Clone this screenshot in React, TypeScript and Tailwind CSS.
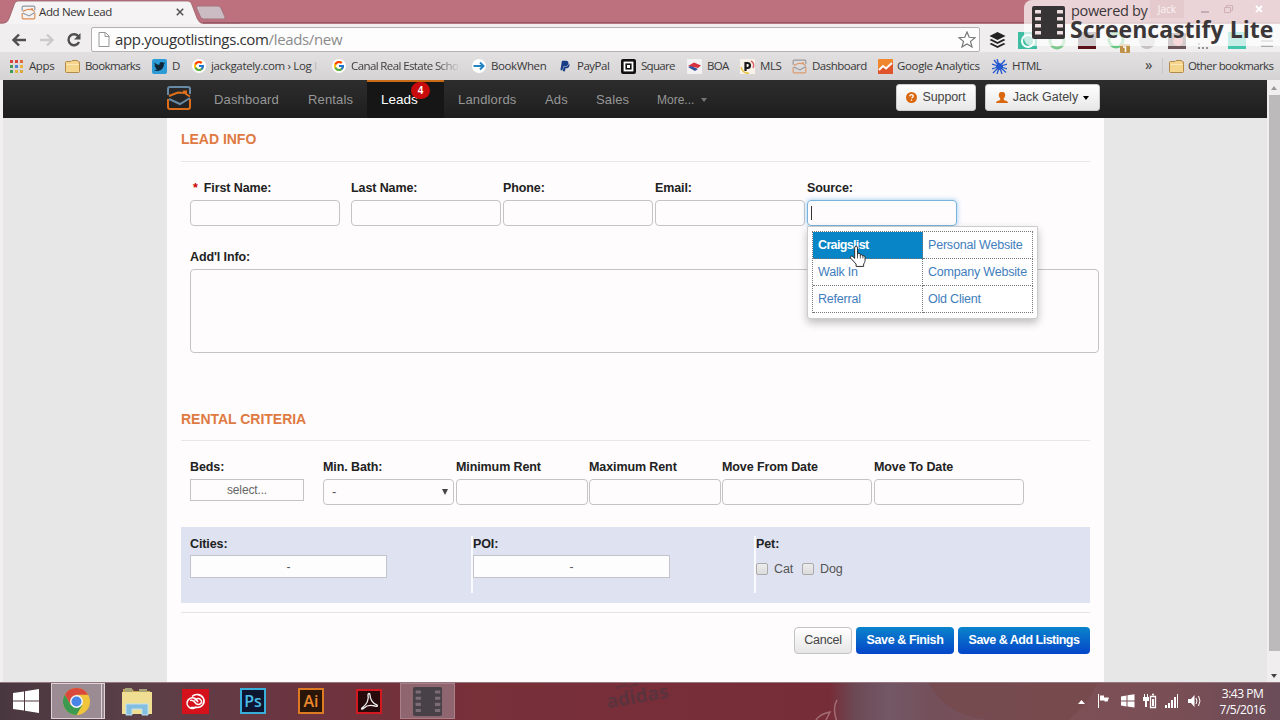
import type { ReactNode } from "react";
import { FcGoogle } from "react-icons/fc";
import { FaPaypal, FaTwitter } from "react-icons/fa";

const LEAD_FIELDS = [
  { label: "First Name:", slot: "w-[161px]", required: true },
  { label: "Last Name:", slot: "w-[152px]" },
  { label: "Phone:", slot: "w-[152px]" },
  { label: "Email:", slot: "w-[152px]" },
];

const RENTAL_FIELDS = [
  { label: "Minimum Rent", slot: "w-[133px]", input: "w-[132px]" },
  { label: "Maximum Rent", slot: "w-[133px]", input: "w-[132px]" },
  { label: "Move From Date", slot: "w-[152px]", input: "w-[150px]" },
  { label: "Move To Date", slot: "w-[152px]", input: "w-[150px]" },
];

const SOURCES = [
  "Craigslist",
  "Personal Website",
  "Walk In",
  "Company Website",
  "Referral",
  "Old Client",
];

function HouseIcon({ size, top, bottom }: { size: number; top: string; bottom: string }) {
  return (
    <svg width={size} height={size} viewBox="0 0 26 26" fill="none" strokeWidth="2">
      <path d="M2 10V4a2 2 0 0 1 2-2h18a2 2 0 0 1 2 2v5" stroke={top} />
      <path d="M3 11l9-3.500 6 .5V6.500h2V9l4 2.500M24 14v8a2 2 0 0 1-2 2H4a2 2 0 0 1-2-2V14" stroke={bottom} />
      <path d="M3 14l11 5 10-6" stroke={top} />
    </svg>
  );
}

function FolderIcon() {
  return (
    <svg width="15" height="13" viewBox="0 0 15 13">
      <path d="M.5 2.500a1 1 0 0 1 1-1H6l1 -1h5.500l1 1.500h1v9.500a1 1 0 0 1-1 1h-12a1 1 0 0 1-1-1z" fill="#f5d58c" stroke="#b28a4c" />
      <path d="M1.500 4.500h12" stroke="#fce9b4" />
    </svg>
  );
}

function AppsIcon() {
  const colors = ["#d9453d", "#d9453d", "#dd6b3a", "#4a9a52", "#4b7fd0", "#e4b43c", "#3f9a57", "#e4b43c", "#d8a93c"];
  return (
    <svg width="13" height="13" viewBox="0 0 13 13">
      {colors.map((color, i) => (
        <rect key={i} x={(i % 3) * 5} y={Math.floor(i / 3) * 5} width="3" height="3" fill={color} />
      ))}
    </svg>
  );
}

function FilmIcon({ width, height, color, hole }: { width: number; height: number; color: string; hole: string }) {
  return (
    <svg width={width} height={height} viewBox="0 0 33 33" preserveAspectRatio="none">
      <rect width="33" height="33" rx="2" fill={color} />
      {[4, 11, 18, 25].map((y) => (
        <g key={y} fill={hole}>
          <rect x="3" y={y} width="6" height="3.500" rx=".5" />
          <rect x="25" y={y} width="6" height="3.500" rx=".5" />
        </g>
      ))}
    </svg>
  );
}

function Bookmark({ slot, gap = "gap-[5px]", tracking = "tracking-[-0.25px]", icon, children }: { slot: string; gap?: string; tracking?: string; icon: ReactNode; children: ReactNode }) {
  return (
    <div className={`flex shrink-0 items-center ${gap} ${slot}`}>
      <span className="flex shrink-0">{icon}</span>
      <span className={`whitespace-nowrap ${tracking}`}>{children}</span>
    </div>
  );
}

function TabStrip() {
  return (
    <div className="relative h-6 bg-[#bd707d]">
      <svg className="absolute inset-0" width="240" height="24" viewBox="0 0 240 24">
        <path d="M0 23.500h2c5 0 6-2 8-7l4-11C15 2 16 1 19 1h167c4 0 5 1 6 4l5 13c2 4 3 5.500 6 5.500V24H0z" fill="#f6f3f4" />
        <path d="M0 23h2c5 0 6-2 8-7l4-11C15 2 16 1 19 1h167c4 0 5 1 6 4l5 13c2 4 3 5 6 5h37" fill="none" stroke="#95626c" strokeWidth=".8" />
        <path d="M198 6h20q2 0 3 2l4 9q.5 2-1.500 2h-20q-2 0-3-2l-4-9q-.5-2 1.500-2z" fill="#cbbcc4" stroke="#a2727d" />
      </svg>
      <div className="absolute top-[22px] right-0 left-[203px] h-px bg-[#8c5b65]" />
      <div className="relative flex h-6 items-center pl-[21px]">
        <HouseIcon size={15} top="#8e97a0" bottom="#de8c50" />
        <span className="ml-[3px] w-[137px] text-[11.500px] tracking-[-0.35px] text-[#333]">Add New Lead</span>
        <svg width="8" height="8" viewBox="0 0 8 8" stroke="#555" strokeWidth="1.600">
          <path d="M.8.8l6.400 6.400M7.200.8L.8 7.200" />
        </svg>
      </div>
    </div>
  );
}

function Toolbar() {
  return (
    <div className="flex h-7 items-center bg-[#f0eeef] pl-3">
      <svg className="mt-[3px]" width="70" height="18" viewBox="0 0 70 18" fill="none" strokeWidth="2.400">
        <path d="M14 9H2M7 3.500L1.500 9 7 14.500" stroke="#4f4f4f" />
        <path d="M28 9h12M35 3.500L40.500 9 35 14.500" stroke="#cbcbcb" />
        <path d="M66.500 5.500A5.500 5.500 0 1 0 67 11" stroke="#4f4f4f" />
        <path d="M68.500 2v6.500H62z" fill="#4f4f4f" />
      </svg>
      <div className="mt-[3px] ml-[9px] flex h-[25px] w-[889px] items-center rounded-[2px] border border-[#b4b2b3] bg-[#fefdfd] pl-[6px]">
        <svg width="12" height="15" viewBox="0 0 12 15" fill="#fff" stroke="#969696" className="shrink-0">
          <path d="M1 .5h6.500L11 4v10.500H1zM7 1v3.500h4" />
        </svg>
        <span className="ml-[5px] w-[843px] text-[15px] tracking-[-0.35px] text-[#8b8b8b]">
          <span className="text-[#333]">app.yougotlistings.com</span>/leads/new
        </span>
        <svg width="18" height="17" viewBox="0 0 18 17" fill="#fff" stroke="#777" strokeWidth="1.200" className="shrink-0">
          <path d="M9 1l2.200 5.300 5.800.4-4.500 3.700 1.500 5.600L9 13l-5 3 1.500-5.600L1 6.700l5.800-.4z" />
        </svg>
      </div>
      <svg className="mt-[3px] ml-[9px]" width="17" height="18" viewBox="0 0 17 18" fill="#222">
        <path d="M8.500 1l8 4-8 4-8-4z" />
        <path d="M2.500 8l6 3 6-3 2 1-8 4-8-4z" />
        <path d="M2.500 12l6 3 6-3 2 1-8 4-8-4z" />
      </svg>
      <svg className="mt-[6px] ml-[12px]" width="262" height="27" viewBox="0 0 262 27">
        <rect x="0" y="4" width="19" height="17" fill="#3fbda2" />
        <circle cx="10" cy="13" r="6" fill="none" stroke="#f4fffc" strokeWidth="2" />
        <circle cx="39" cy="13" r="7" fill="none" stroke="#7cc88a" strokeWidth="3" />
        <rect x="60" y="4" width="18" height="17" fill="#635357" />
        <rect x="60" y="18" width="18" height="3" fill="#5b1219" />
        <circle cx="98" cy="12" r="7" fill="none" stroke="#65c680" strokeWidth="3" />
        <rect x="102" y="16" width="10" height="9" rx="1" fill="#bf9146" />
        <path d="M105 19h2.500v5" fill="none" stroke="#fff" strokeWidth="1.500" />
        <circle cx="129" cy="13" r="8" fill="#c5c1c2" />
        <rect x="150" y="5" width="18" height="16" fill="#6b5558" />
        <circle cx="160" cy="13" r="5" fill="#e17883" />
        <path d="M180 20h2m2 0h2m2 0h2m-10-4h2" stroke="#777" strokeWidth="1.500" />
        <rect x="210" y="4" width="18" height="17" fill="#43c7ac" />
        <path d="M243 8h12m-12 5h12m-12 5h12" stroke="#aaa" strokeWidth="2" />
      </svg>
    </div>
  );
}

function BookmarkBar() {
  return (
    <div className="flex h-7 items-center bg-[linear-gradient(#e2e0e1,#d5d3d4)] pl-[10px] text-[11.500px] text-[#393939]">
      <Bookmark slot="w-[55px]" gap="gap-[6px]" tracking="tracking-[-0.4px]" icon={<AppsIcon />}>Apps</Bookmark>
      <Bookmark slot="w-[87px]" tracking="tracking-[-0.6px]" icon={<FolderIcon />}>Bookmarks</Bookmark>
      <Bookmark
        slot="w-[40px]"
        icon={<span className="flex size-[15px] items-center justify-center rounded-[2px] bg-[#2c9bd6]"><FaTwitter size={11} color="#102738" /></span>}
      >
        D
      </Bookmark>
      <Bookmark slot="w-[140px]" tracking="tracking-[-0.35px]" icon={<span className="rounded-full bg-white p-px"><FcGoogle size={12} /></span>}>
        jackgately.com › Log <span className="text-[#bbb]">I</span>
      </Bookmark>
      <Bookmark slot="w-[140px]" tracking="tracking-[-0.6px]" icon={<span className="rounded-full bg-white p-px"><FcGoogle size={12} /></span>}>
        <span className="bg-[linear-gradient(90deg,#393939_80%,#c8c8c8)] bg-clip-text text-transparent">Canal Real Estate Scho</span>
      </Bookmark>
      <Bookmark
        slot="w-[87px]"
        tracking="tracking-[-0.4px]"
        icon={
          <svg width="14" height="14" viewBox="0 0 14 14">
            <circle cx="7" cy="7" r="7" fill="#fff" />
            <path d="M1.500 7h10M8 3.500L11.500 7 8 10.500" fill="none" stroke="#2383c0" strokeWidth="2" />
          </svg>
        }
      >
        BookWhen
      </Bookmark>
      <Bookmark slot="w-[62px]" gap="gap-[6px]" tracking="tracking-[-0.5px]" icon={<FaPaypal size={12} color="#163d86" />}>PayPal</Bookmark>
      <Bookmark
        slot="w-[66px]"
        tracking="tracking-[-0.7px]"
        icon={
          <svg width="15" height="15" viewBox="0 0 15 15">
            <rect width="15" height="15" rx="2" fill="#111" />
            <rect x="3.500" y="3.500" width="8" height="8" fill="none" stroke="#fff" strokeWidth="1.800" />
            <rect x="6" y="6" width="3" height="3" fill="#fff" />
          </svg>
        }
      >
        Square
      </Bookmark>
      <Bookmark
        slot="w-[53px]"
        tracking="tracking-[-0.7px]"
        icon={
          <svg width="15" height="15" viewBox="0 0 15 15">
            <rect width="15" height="15" fill="#f4f1f2" />
            <path d="M1 7l6-3.500 7 3-3 2.500z" fill="#d9303e" />
            <path d="M1 8l3-1 7 3-3 2z" fill="#31509a" />
          </svg>
        }
      >
        BOA
      </Bookmark>
      <Bookmark
        slot="w-[52px]"
        tracking="tracking-[-0.4px]"
        icon={
          <svg width="15" height="15" viewBox="0 0 15 15">
            <rect width="15" height="15" fill="#f7f2ea" />
            <path d="M11 2a5 5 0 0 1 2 7" fill="none" stroke="#dc6464" strokeWidth="1.500" />
            <path d="M1 8q2 7 8 6" fill="none" stroke="#e8c74a" strokeWidth="1.500" />
            <path d="M5.500 3v9M5.500 4h2a2 2 0 0 1 0 5h-2" fill="none" stroke="#1a1a1a" strokeWidth="2.200" />
          </svg>
        }
      >
        MLS
      </Bookmark>
      <Bookmark slot="w-[86px]" tracking="tracking-[-0.5px]" icon={<HouseIcon size={15} top="#999" bottom="#dd9a70" />}>Dashboard</Bookmark>
      <Bookmark
        slot="w-[114px]"
        tracking="tracking-[-0.35px]"
        gap="gap-1"
        icon={
          <svg width="15" height="15" viewBox="0 0 15 15">
            <rect width="15" height="15" rx="1" fill="#f0862e" />
            <path d="M0 11l5-4 3 2 7-6v12H0z" fill="#e0542c" />
            <path d="M1 11l4-4 3 2.500L14 4" fill="none" stroke="#fff" strokeWidth="2" />
          </svg>
        }
      >
        Google Analytics
      </Bookmark>
      <Bookmark
        slot="w-[153px]"
        tracking="tracking-[-0.45px]"
        icon={
          <svg width="15" height="15" viewBox="0 0 15 15" stroke="#2458cf" strokeWidth="1.300">
            <path d="M7.500 4v7M4 7.500h7M7.500 7.500L2 1M7.500 7.500L13 1M7.500 7.500L1 14M7.500 7.500l6.500 6M7.500 7.500L0 5M7.500 7.500L15 5M7.500 7.500L0 10M7.500 7.500l7.500 2.500M7.500 7.500L5 0M7.500 7.500L10 15M7.500 7.500L5 15" />
            <circle cx="7.500" cy="7.500" r="2.500" fill="#2458cf" />
          </svg>
        }
      >
        HTML
      </Bookmark>
      <span className="w-[17px] shrink-0 pb-[3px] text-[15px] leading-none">»</span>
      <span className="mr-[6px] h-4 w-px shrink-0 bg-[#cac8c9]" />
      <Bookmark slot="w-[110px]" tracking="tracking-[-0.6px]" gap="gap-1" icon={<FolderIcon />}>Other bookmarks</Bookmark>
    </div>
  );
}

// Recorder watermark over the top right corner of the window
function Watermark() {
  return (
    <div className="absolute top-0 right-0 flex h-[46px] w-[256px] overflow-hidden rounded-l-[8px] bg-white/70 pl-[8px]">
      <div className="pt-[6px]">
        <FilmIcon width={33} height={33} color="#373435" hole="#efdfe1" />
      </div>
      <div className="ml-[5px] pt-px whitespace-nowrap text-[#3b3738]">
        <div className="ml-px text-[14.500px] leading-5 tracking-[-0.35px]">powered by</div>
        <div className="-mt-[4px] text-[23px] leading-[25px] font-bold tracking-[0.02px]">Screencastify Lite</div>
      </div>
      <div className="absolute top-0 right-0 flex h-[18px] w-[130px] items-center text-[10px] text-white/80">
        <span className="flex h-full w-[34px] items-center justify-end bg-[#d9b8bf]/40 pr-[8px]">Jack</span>
        <svg className="ml-[14px]" width="72" height="10" viewBox="0 0 72 10" fill="none">
          <path d="M3 8h8" stroke="#b9a2a7" strokeWidth="1.500" />
          <path d="M26.500 3.500h6v5h-6zM28.500 3V1.500h6v5H33" stroke="#d2b0b7" />
          <path d="M58 2l6 6M64 2l-6 6" stroke="#fff" strokeWidth="1.800" />
        </svg>
      </div>
    </div>
  );
}

function NavLink({ slot, children }: { slot: string; children: ReactNode }) {
  return <a className={`flex shrink-0 items-center pt-[2px] pl-[14px] ${slot}`}>{children}</a>;
}

function AppNav() {
  return (
    <nav className="flex h-[38px] items-stretch bg-[linear-gradient(#2d2d2d,#1e1e1e)] pl-[163px] text-[13px] tracking-[0.15px] text-[#979797]">
      <div className="flex w-[34px] items-center pb-[2px]">
        <HouseIcon size={26} top="#6789a3" bottom="#dd6f1b" />
      </div>
      <NavLink slot="w-[94px]">Dashboard</NavLink>
      <NavLink slot="w-[73px]">Rentals</NavLink>
      <a className="relative flex w-[77px] shrink-0 items-center border-t-2 border-[#c96a17] bg-[#161616] pl-[14px] text-[13.500px] tracking-[0px] text-white">
        Leads
        <span className="absolute top-0 left-[44px] flex h-[17px] w-[19px] items-center justify-center rounded-full bg-[#c90b0b] text-[10px] font-bold">4</span>
      </a>
      <NavLink slot="w-[87px]">Landlords</NavLink>
      <NavLink slot="w-[51px]">Ads</NavLink>
      <NavLink slot="w-[61px]">Sales</NavLink>
      <NavLink slot="w-[253px]">
        <span className="text-xs tracking-[0px]">More...</span>
        <span className="ml-[7px] border-x-[3.500px] border-t-4 border-x-transparent border-t-[#777]" />
      </NavLink>
      <div className="flex items-start gap-[9px] pt-1 text-[12.500px] tracking-[-0.1px] text-[#444]">
        <button className="flex h-[27px] w-[80px] items-center justify-center gap-[5px] rounded-[3px] border border-[#ccc] bg-[linear-gradient(#fff,#e7e7e7)]">
          <svg width="11" height="11" viewBox="0 0 11 11">
            <circle cx="5.500" cy="5.500" r="5.500" fill="#d9680f" />
            <path d="M3.800 4.300q0-1.600 1.700-1.600t1.700 1.500q0 .9-1.700 1.800" fill="none" stroke="#fff" strokeWidth="1.300" />
            <circle cx="5.500" cy="8" r=".8" fill="#fff" />
          </svg>
          Support
        </button>
        <button className="flex h-[27px] w-[115px] items-center justify-center rounded-[3px] border border-[#ccc] bg-[linear-gradient(#fff,#e7e7e7)]">
          <svg className="mr-[5px]" width="12" height="11" viewBox="0 0 12 11" fill="#d9680f">
            <path d="M2.800 3a3.200 3.200 0 0 1 6.400 0c0 1.500-.7 2.800-1.400 3.500V8c1.700.5 4.200 1 4.200 3H0c0-2 2.500-2.500 4.200-3V6.500C3.500 5.800 2.800 4.500 2.800 3z" />
          </svg>
          <span className="tracking-[0px]">Jack Gately</span>
          <span className="ml-[5px] border-x-[3.500px] border-t-4 border-x-transparent border-t-black" />
        </button>
      </div>
    </nav>
  );
}

function Label({ children }: { children: ReactNode }) {
  return <label className="block h-[17px] text-[12.500px] leading-[17px] font-bold tracking-[-0.1px] whitespace-nowrap text-[#222]">{children}</label>;
}

function SourceMenu() {
  return (
    <div className="absolute top-[26px] left-0 z-10 w-[231px] rounded-b-[3px] border border-[#ccc] bg-white p-[4px] pb-[5px] shadow-[0_4px_8px_rgba(0,0,0,0.25)]">
      <div className="grid grid-cols-2 border-t border-l border-dotted border-[#777] text-[12.500px] tracking-[-0.2px]">
        {SOURCES.map((source, i) => (
          <div
            key={source}
            className={`flex h-[27px] items-center border-r border-b border-dotted border-[#777] pl-[5px] whitespace-nowrap ${
              i === 0 ? "bg-[#0885c7] font-bold tracking-[-0.65px] text-white" : "text-[#3f7ebd]"
            }`}
          >
            {source}
          </div>
        ))}
      </div>
      <svg className="absolute top-[18px] left-[41px]" width="17" height="23" viewBox="0 0 18 24">
        <path
          d="M6 14V3q0-2 1.500-2T9 3v7q0-1.500 1.500-1.500T12 10v1q.3-1 1.500-.8t1.200 1.600q.2-.8 1.200-.6T17 13v3c0 2-1 3-1.500 4v2.500h-8V20L2 14q-1-1.500 0-2.200t2 .2z"
          fill="#fff"
          stroke="#222"
        />
        <path d="M9 10v4m3-3v3m2.700-2v2" stroke="#222" strokeWidth=".8" />
      </svg>
    </div>
  );
}

function LeadForm() {
  return (
    <main className="h-[564px] w-[937px] bg-[#fefcfd] pl-[14px]">
      <section className="h-[280px]">
        <h2 className="h-[44px] w-[909px] border-b border-[#e9e6e7] pt-[11px] text-[14px] leading-5 font-bold tracking-[-0.02px] text-[#de7a42]">
          LEAD INFO
        </h2>
        <div className="flex pt-[18px] pl-[9px]">
          {LEAD_FIELDS.map((field) => (
            <div key={field.label} className={`shrink-0 ${field.slot}`}>
              <Label>
                {field.required && <span className="mr-[6px] ml-[3px] text-[#c00]">*</span>}
                {field.label}
              </Label>
              <div className="mt-[3px] h-[26px] w-[150px] rounded-[4px] border border-[#c4c4c6]" />
            </div>
          ))}
          <div className="relative w-[231px] shrink-0">
            <Label>Source:</Label>
            <div className="relative mt-[3px]">
              <div className="flex h-[26px] w-[150px] items-center rounded-[4px] border border-[#77b3de] pl-[3px] shadow-[0_0_5px_rgba(82,168,236,0.6)]">
                <span className="h-[14px] w-px bg-[#333]" />
              </div>
              <SourceMenu />
            </div>
          </div>
        </div>
        <div className="pt-[23px] pl-[9px]">
          <Label>Add'l Info:</Label>
          <div className="mt-[3px] h-[84px] w-[909px] rounded-[4px] border border-[#c4c4c6]" />
        </div>
      </section>
      <section className="w-[909px]">
        <h2 className="h-[43px] border-b border-[#e9e6e7] pt-[11px] text-[14px] leading-5 font-bold tracking-[-0.02px] text-[#de7a42]">
          RENTAL CRITERIA
        </h2>
        <div className="flex h-[86px] pt-[18px] pl-[9px]">
          <div className="w-[133px] shrink-0">
            <Label>Beds:</Label>
            <div className="mt-[3px] flex h-[22px] w-[114px] items-center justify-center border border-[#c4c4c6] text-[12px] tracking-[-0.15px] text-[#666]">select...</div>
          </div>
          <div className="w-[133px] shrink-0">
            <Label>Min. Bath:</Label>
            <div className="mt-[3px] flex h-[26px] w-[131px] items-center justify-between rounded-[4px] border border-[#c4c4c6] pr-[5px] pl-[8px] text-[13px] text-[#555]">
              <span>-</span>
              <span className="border-x-[3px] border-t-[6px] border-x-transparent border-t-[#444]" />
            </div>
          </div>
          {RENTAL_FIELDS.map((field) => (
            <div key={field.label} className={`shrink-0 ${field.slot}`}>
              <Label>{field.label}</Label>
              <div className={`mt-[3px] h-[26px] rounded-[4px] border border-[#c4c4c6] ${field.input}`} />
            </div>
          ))}
        </div>
        <div className="flex h-[76px] bg-[#dfe2f0] pt-[9px] pl-[9px]">
          {["Cities:", "POI:"].map((label) => (
            <div key={label} className="h-[57px] w-[283px] shrink-0 border-r-2 border-[#fafafd]">
              <Label>{label}</Label>
              <div className="mt-[2px] flex h-[23px] w-[197px] items-center justify-center border border-[#c4c5cc] bg-[#fefdfe] text-[12px] text-[#555]">-</div>
            </div>
          ))}
          <div>
            <Label>Pet:</Label>
            <div className="flex items-center pt-[7px] text-[12.500px] leading-[18px] tracking-[-0.1px] text-[#555]">
              {["Cat", "Dog"].map((pet) => (
                <span key={pet} className="flex w-[46px] items-center gap-[6px]">
                  <span className="size-3 shrink-0 rounded-[2px] border border-[#aaa] bg-[linear-gradient(#ececec,#dcdcdc)]" />
                  {pet}
                </span>
              ))}
            </div>
          </div>
        </div>
        <div className="mt-[9px] flex justify-end gap-[4px] border-t border-[#e4e4e6] pt-[14px] text-[12.500px]">
          <button className="h-[27px] w-[58px] rounded-[4px] border border-[#c3c3c3] bg-[linear-gradient(#fff,#e6e6e6)] pb-px tracking-[-0.2px] text-[#444]">Cancel</button>
          <button className="h-[27px] w-[98px] rounded-[4px] bg-[linear-gradient(#0a83cb,#0545c9)] pb-px font-bold tracking-[-0.4px] whitespace-nowrap text-white">Save &amp; Finish</button>
          <button className="h-[27px] w-[132px] rounded-[4px] bg-[linear-gradient(#0a83cb,#0545c9)] pb-px font-bold tracking-[-0.5px] whitespace-nowrap text-white">Save &amp; Add Listings</button>
        </div>
      </section>
    </main>
  );
}

function Scrollbar() {
  return (
    <div className="flex w-[13px] shrink-0 flex-col items-center justify-between bg-[#f0eeef] pt-[6px] pb-[4px]">
      <span className="border-x-[3.500px] border-b-4 border-x-transparent border-b-[#999]" />
      <span className="mt-[5px] mb-[23px] ml-[2px] w-[11px] grow bg-[#bcbabb]" />
      <span className="border-x-[3.500px] border-t-4 border-x-transparent border-t-[#444]" />
    </div>
  );
}

function TaskSlot({ slot, children }: { slot: string; children: ReactNode }) {
  return <div className={`flex h-full shrink-0 items-center justify-center ${slot}`}>{children}</div>;
}

function Taskbar() {
  return (
    <footer className="relative h-[38px] overflow-hidden bg-[linear-gradient(90deg,#49373f,#5c4048_150px,#6b3540_290px,#783039_470px,#772d38_830px,#6c4a55_855px,#735866_890px,#74505b_930px,#7c5055_1060px,#794e55_1180px,#6a4d59)]">
      <svg className="absolute inset-0" width="1280" height="38" viewBox="0 0 1280 38" fill="none">
        <path d="M928 0q20 38 70 38h70q20-15 30-38z" fill="#74474a" opacity=".6" />
        <path d="M837 18q-5 8 0 22M816 38q4-6 14-8l-4 8" stroke="#a36b74" strokeWidth="1.500" />
        <path d="M616 6l10-3M628 5l10-3" stroke="#63323d" strokeWidth="2" />
        <path d="M0 .5h1280" stroke="#957780" strokeWidth="1" />
      </svg>
      <span className="absolute top-[4px] left-[606px] -rotate-10 text-[19px] leading-5 font-bold tracking-[0px] text-[#5b333e]">adidas</span>
      <div className="relative flex h-full items-center">
        <TaskSlot slot="w-[51px]">
          <svg width="26" height="24" viewBox="0 0 26 24" fill="#fff">
            <path d="M0 4l11-1.500v9H0zM12 2.300L26 0v11.500H12zM0 12.500h11v9L0 20zM12 12.500h14V24l-14-2.300z" />
          </svg>
        </TaskSlot>
        <div className="flex h-[36px] w-[55px] shrink-0">
          <div className="flex w-[51px] items-center justify-center border border-[#ddd3d6] bg-[#9a8c92]">
            <svg width="27" height="27" viewBox="0 0 27 27">
              <circle cx="13.500" cy="13.500" r="13.500" fill="#f0c43b" />
              <path d="M1.800 6.750A13.500 13.500 0 0 1 25.200 6.750H13.500L7.650 16.900z" fill="#d94a3d" />
              <path d="M1.800 6.750A13.500 13.500 0 0 0 13.500 27l5.850-10.100H7.650z" fill="#3c9a50" />
              <circle cx="13.500" cy="13.500" r="6.500" fill="#f5f5f5" />
              <circle cx="13.500" cy="13.500" r="5" fill="#4684e6" />
            </svg>
          </div>
          <div className="w-[3px] border-y border-r border-[#ddd3d6] bg-[#9a8c92]" />
        </div>
        <TaskSlot slot="w-[62px]">
          <svg width="32" height="29" viewBox="0 0 32 29">
            <path d="M2 2h9l2 2h16v22H2z" fill="#c7a952" />
            <path d="M4 1h7v4H4zM18 2h8v4h-8z" fill="#a9a47a" />
            <path d="M1 5h30v22H1z" fill="#f0df93" />
            <path d="M5 28V17h22v11h-6v-6H11v6z" fill="#83bde0" stroke="#bfe2f3" />
          </svg>
        </TaskSlot>
        <TaskSlot slot="w-[54px]">
          <svg width="27" height="25" viewBox="0 0 27 25" fill="none" stroke="#fff">
            <rect width="27" height="25" fill="#d5121c" stroke="none" />
            <path d="M14.500 17.500a5.300 5.300 0 1 1-1.500-8q1.500 1 3 3.500M10 7.500a7 6.500 0 1 1 5 11H9" strokeWidth="1.600" />
            <path d="M8 11.500q3-1 5 2t5 1.500q3-2 .5-4.500t-6 1" strokeWidth="1.500" />
          </svg>
        </TaskSlot>
        <TaskSlot slot="w-[62px]">
          <span className="flex size-[26px] items-center justify-center border-2 border-[#38afda] bg-[#0d1531] text-[16px] font-semibold text-[#4cbde9]">Ps</span>
        </TaskSlot>
        <TaskSlot slot="w-[54px]">
          <span className="flex size-[26px] items-center justify-center border-2 border-[#de7b22] bg-[#291609] text-[16px] font-semibold text-[#e8872d]">Ai</span>
        </TaskSlot>
        <TaskSlot slot="w-[62px]">
          <svg width="26" height="25" viewBox="0 0 26 25" fill="none">
            <rect x="1" y="1" width="24" height="23" fill="#260a0c" stroke="#d21920" strokeWidth="2" />
            <path d="M6 19c5-4 7-9 6-13 0-2 2-2 2 0 0 4 3 9 7 10 1 1 0 2-2 1-4-1-8-1-11 2-2 2-3 1-2 0z" stroke="#eee" strokeWidth="1.300" />
          </svg>
        </TaskSlot>
        <div className="flex h-[36px] w-[55px] shrink-0 items-center justify-center border border-[#a8808a] bg-[#8f6570]">
          <FilmIcon width={29} height={29} color="#484248" hole="#7c6c74" />
        </div>
        <div className="ml-auto flex items-center text-white">
          <svg width="125" height="16" viewBox="0 0 125 16" fill="#fff">
            <path d="M0 11l3.500-4 3.500 4z" />
            <path d="M20 1h1v14h-1zM22 2.500h4v2h5l-1.500 4h-3v-1H22z" />
            <path d="M43 3.500l5.500-1v5H43zM49.500 2.300l7-1v6.200h-7zM43 8.500h5.500v5l-5.500-1zM49.500 8.500h7v6l-7-1z" />
            <path d="M66 1h1v3h-1zM69 1h1v3h-1zM65 4h6v4h-2v6h-2V8h-2z" />
            <path d="M72.500 3.500h5v11h-5zM74 1.500h2" fill="none" stroke="#fff" strokeWidth="1.300" />
            <path d="M74 6h2v7h-2z" />
            <path d="M87 12h2v3h-2zM90 10h2v5h-2zM93 7h2v8h-2zM96 4h2v11h-2zM99 1h1v14h-1z" />
            <path d="M110 6h3l3.500-4v12l-3.500-4h-3z" />
            <path d="M118 5q2 3 0 6M120.500 3q3 5 0 10" fill="none" stroke="#fff" />
          </svg>
          <div className="ml-[10px] w-[67px] pt-px pr-2 text-center text-[12px] leading-[16px] tracking-[-0.5px]">
            <div>3:43 PM</div>
            <div>7/5/2016</div>
          </div>
        </div>
      </div>
    </footer>
  );
}

export default function App() {
  return (
    <div className="h-[720px] w-[1280px] overflow-hidden bg-[#e8e7e8] font-['Open_Sans',sans-serif]">
      <header className="relative">
        <TabStrip />
        <Toolbar />
        <BookmarkBar />
        <Watermark />
      </header>
      <div className="flex h-[602px] font-['Liberation_Sans',Arial,sans-serif]">
        <div className="w-[3px] shrink-0 bg-[#f2f0f1]" />
        <div className="w-[1264px] shrink-0">
          <AppNav />
          <div className="pl-[164px]">
            <LeadForm />
          </div>
        </div>
        <Scrollbar />
      </div>
      <Taskbar />
    </div>
  );
}
